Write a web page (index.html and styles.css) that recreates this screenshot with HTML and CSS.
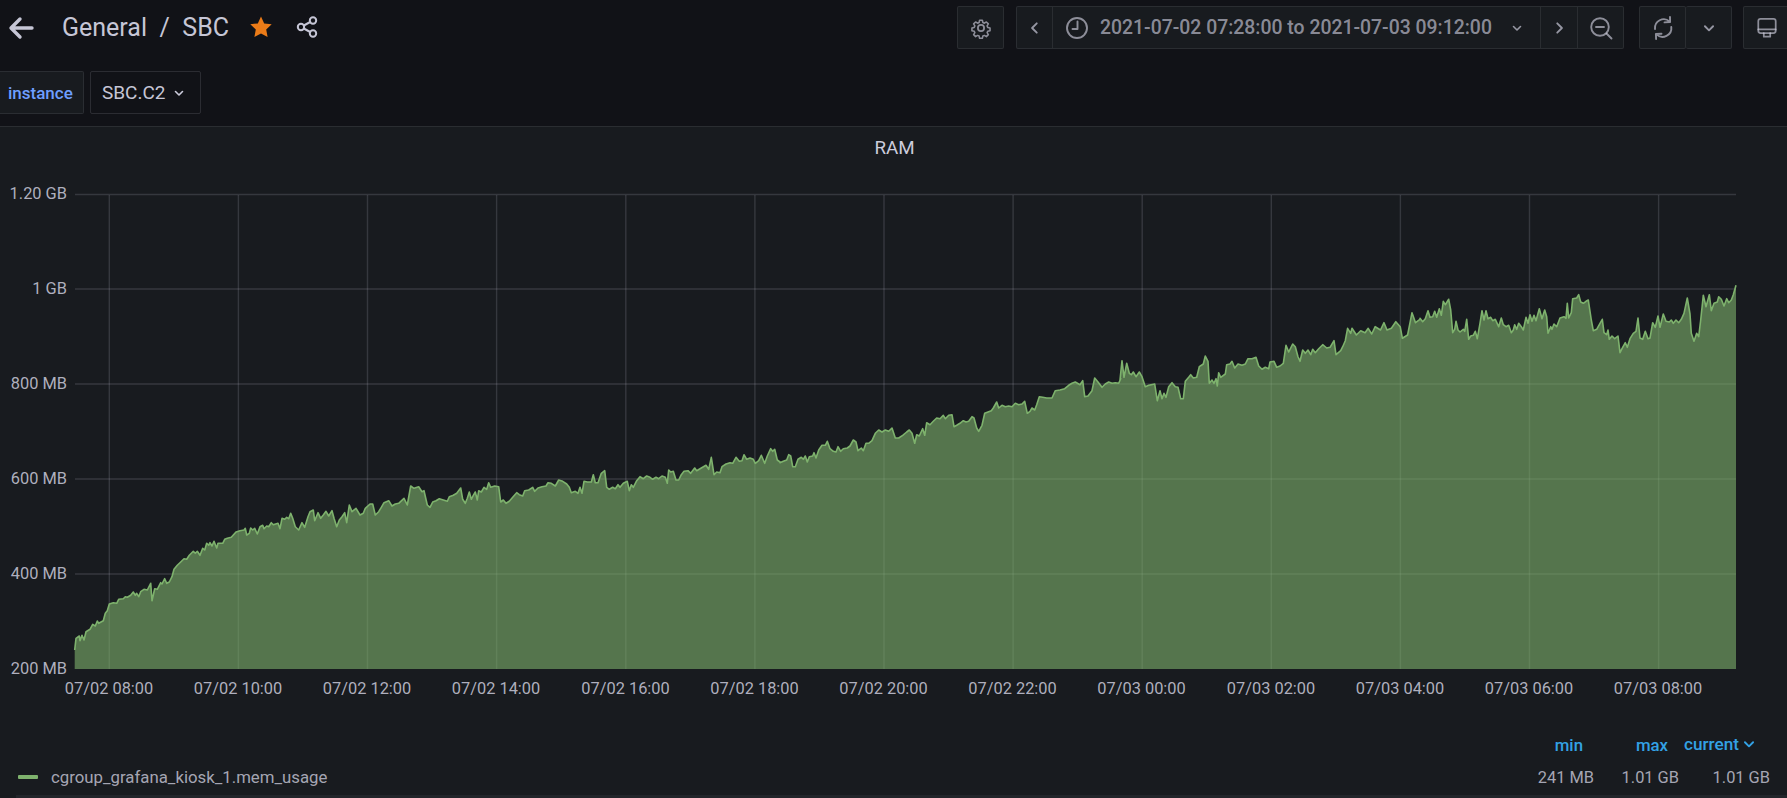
FILE: index.html
```html
<!DOCTYPE html>
<html lang="en">
<head>
<meta charset="utf-8">
<title>General / SBC</title>
<link rel="stylesheet" href="styles.css">
</head>
<body>
<header class="topbar">
  <button class="back" aria-label="Back">
    <svg class="ico-back" viewBox="0 0 26 24"><path d="M12 3 3 12l9 9M3.500 12H24"/></svg>
  </button>
  <h1 class="crumbs"><span>General</span><span class="slash">/</span><span>SBC</span></h1>
  <svg class="ico-star" viewBox="0 0 24 24"><path d="M12 1.500l3.200 6.900 7.500.9-5.500 5.200 1.400 7.500L12 18.400l-6.600 3.600 1.400-7.500-5.500-5.200 7.500-.9z"/></svg>
  <svg class="ico-share" viewBox="0 0 22 22"><circle cx="17" cy="4.500" r="3.200"/><circle cx="5" cy="11" r="3.200"/><circle cx="17" cy="17.500" r="3.200"/><path d="M7.800 9.500l6.400-3.500M7.800 12.500l6.400 3.500"/></svg>
  <div class="spacer"></div>
  <button class="btn btn-gear" aria-label="Settings">
    <svg class="ico" viewBox="0 0 24 24"><circle cx="12" cy="12" r="3.400"/><path d="M10.300 2.500h3.400l.6 2.800 1.900.8 2.400-1.500 2.400 2.400-1.500 2.400.8 1.900 2.800.6v3.400l-2.800.6-.8 1.900 1.500 2.400-2.400 2.400-2.400-1.500-1.900.8-.6 2.800h-3.400l-.6-2.800-1.900-.8-2.400 1.500-2.400-2.400 1.500-2.400-.8-1.900-2.800-.6v-3.400l2.800-.6.8-1.900-1.500-2.400 2.400-2.400 2.400 1.500 1.900-.8z" transform="translate(1.300 1.300) scale(.89)"/></svg>
  </button>
  <div class="range">
    <button class="btn seg seg-prev" aria-label="Earlier"><svg class="chev" viewBox="0 0 12 12"><path d="M7.500 2 3.500 6l4 4"/></svg></button>
    <button class="btn seg seg-picker">
      <svg class="ico ico-lg" viewBox="0 0 24 24"><circle cx="12" cy="12" r="10"/><path d="M12.500 5.500V13H7.500"/></svg>
      <span class="range-text">2021-07-02 07:28:00 to 2021-07-03 09:12:00</span>
      <svg class="chev chev-range" viewBox="0 0 12 12"><path d="M2.500 4.500 6 8l3.500-3.500"/></svg>
    </button>
    <button class="btn seg seg-next" aria-label="Later"><svg class="chev" viewBox="0 0 12 12"><path d="M4.500 2l4 4-4 4"/></svg></button>
    <button class="btn seg seg-zoom" aria-label="Zoom out"><svg class="ico ico-lg" viewBox="0 0 24 24"><circle cx="11" cy="11" r="8.800"/><path d="M7 11h8M17.500 17.500l5 5"/></svg></button>
  </div>
  <div class="refresh">
    <button class="btn btn-sync" aria-label="Refresh"><svg class="ico ico-lg" viewBox="0 0 24 24"><path d="M4 13a8.800 8.800 0 0 1 14.500-7.600M20.300 11a8.800 8.800 0 0 1-14.800 7.400M13.500 6.400l5.600-.4L19 1M10.500 17.800l-5.600.2.200 5"/></svg></button>
    <button class="btn btn-drop" aria-label="Refresh interval"><svg class="chev" viewBox="0 0 12 12"><path d="M2.500 4.500 6 8l3.500-3.500"/></svg></button>
  </div>
  <button class="btn btn-tv" aria-label="Cycle view"><svg class="ico" viewBox="0 0 24 24"><rect x="2.500" y="2" width="19" height="15.500" rx="2.500"/><path d="M2.500 13.500h19M8.500 17.500v4h7v-4"/></svg></button>
</header>

<nav class="vars">
  <label class="var-label">instance</label>
  <button class="var-value">SBC.C2<svg class="chev chev-var" viewBox="0 0 12 12"><path d="M2.500 4.500 6 8l3.500-3.500"/></svg></button>
</nav>

<main class="panel">
  <h2 class="panel-title">RAM</h2>
  <svg class="chart" viewBox="0 160 1787 560" width="1787" height="560">
    <g class="grid">
      <path d="M75 194.500H1736M75 289H1736M75 384H1736M75 479H1736M75 574H1736"/>
      <path d="M109.300 195V669M238.400 195V669M367.500 195V669M496.600 195V669M625.800 195V669M754.900 195V669M884 195V669M1013.100 195V669M1142.200 195V669M1271.300 195V669M1400.400 195V669M1529.500 195V669M1658.600 195V669"/>
    </g>
    <path id="series-fill" class="series-fill" d=""/>
    <path id="series-line" class="series-line" d=""/>
    <g class="y-labels">
      <text x="67" y="199">1.20 GB</text>
      <text x="67" y="294">1 GB</text>
      <text x="67" y="389">800 MB</text>
      <text x="67" y="484">600 MB</text>
      <text x="67" y="579">400 MB</text>
      <text x="67" y="674">200 MB</text>
    </g>
    <g class="x-labels">
      <text x="109" y="694">07/02 08:00</text>
      <text x="238" y="694">07/02 10:00</text>
      <text x="367" y="694">07/02 12:00</text>
      <text x="496" y="694">07/02 14:00</text>
      <text x="625.500" y="694">07/02 16:00</text>
      <text x="754.500" y="694">07/02 18:00</text>
      <text x="883.500" y="694">07/02 20:00</text>
      <text x="1012.500" y="694">07/02 22:00</text>
      <text x="1141.500" y="694">07/03 00:00</text>
      <text x="1271" y="694">07/03 02:00</text>
      <text x="1400" y="694">07/03 04:00</text>
      <text x="1529" y="694">07/03 06:00</text>
      <text x="1658" y="694">07/03 08:00</text>
    </g>
  </svg>
  <section class="legend">
    <span></span>
    <span class="lh">min</span>
    <span class="lh">max</span>
    <span class="lh lh-current">current<svg class="chev chev-legend" viewBox="0 0 12 12"><path d="M2.500 4.500 6 8l3.500-3.500"/></svg></span>
    <span class="series-name"><i class="swatch"></i>cgroup_grafana_kiosk_1.mem_usage</span>
    <span class="val">241 MB</span>
    <span class="val">1.01 GB</span>
    <span class="val">1.01 GB</span>
  </section>
  <div class="strip"></div>
</main>
<script src="chart.js"></script>
</body>
</html>
```
FILE: styles.css
```css
* { box-sizing: border-box; }
html, body { margin: 0; height: 798px; overflow: hidden; }
body {
  background: #111217;
  color: #ccccdc;
  font-family: Roboto, "Liberation Sans", sans-serif;
  font-size: 16px;
  display: flex;
  flex-direction: column;
}
button { font: inherit; color: inherit; padding: 0; background: none; border: 0; }

/* top bar */
.topbar {
  width: 1790px;
  height: 49px;
  padding-top: 6px;
  display: flex;
  align-items: flex-start;
  flex: none;
}
.back { width: 62px; height: 43px; padding-left: 8px; display: flex; align-items: center; }
.ico-back { width: 26px; height: 24px; fill: none; stroke: #c6c6d6; stroke-width: 3.400; stroke-linecap: round; stroke-linejoin: round; }
.crumbs { margin: 0; height: 43px; display: flex; align-items: center; font-size: 25px; font-weight: 400; color: #c6c6d6; white-space: nowrap; width: 187px; }
.slash { margin: 0 12.500px; }
.ico-star { width: 24px; height: 24px; margin-top: 9px; fill: #eb7b18; }
.ico-share { width: 22px; height: 22px; margin: 10px 0 0 23px; fill: none; stroke: #c6c6d6; stroke-width: 2; stroke-linecap: round; }
.spacer { flex: 1; }

.btn {
  height: 43px;
  background: #181b1f;
  border: 1px solid rgba(204, 204, 220, .1);
  border-radius: 2px;
  color: rgba(204, 204, 220, .65);
  display: flex;
  align-items: center;
  justify-content: center;
  flex: none;
}
.ico { width: 22px; height: 22px; fill: none; stroke: rgba(204, 204, 220, .65); stroke-width: 1.900; stroke-linecap: round; stroke-linejoin: round; }
.ico-lg { width: 24px; height: 24px; flex: none; }
.chev { width: 14px; height: 14px; fill: none; stroke: rgba(204, 204, 220, .7); stroke-width: 1.600; stroke-linecap: round; stroke-linejoin: round; }

.btn-gear { width: 47px; margin-right: 12px; }
.range { display: flex; margin-right: 15px; }
.seg { border-radius: 0; border-right-width: 0; }
.seg-prev { width: 36px; border-radius: 2px 0 0 2px; }
.seg-picker { width: 488px; justify-content: flex-start; padding-left: 12px; }
.seg-next { width: 37px; }
.seg-zoom { width: 47px; border-right-width: 1px; border-radius: 0 2px 2px 0; }
.range-text { margin-left: 11px; font-size: 19.400px; font-weight: 500; white-space: nowrap; }
.chev-range { margin-left: 19px; width: 12px; height: 12px; }
.refresh { display: flex; margin-right: 11px; }
.btn-sync { width: 47px; }
.btn-drop { width: 46px; border-left-width: 0; }
.btn-tv { width: 47px; }

/* variables */
.vars { height: 43px; margin-top: 22px; display: flex; gap: 6px; flex: none; }
.var-label {
  width: 84px;
  background: #181b1f;
  border: 1px solid rgba(204, 204, 220, .1);
  border-left: 0;
  border-radius: 0 2px 2px 0;
  color: #6e9fff;
  font-size: 17px;
  font-weight: 500;
  display: flex;
  align-items: center;
  padding-left: 8px;
}
.var-value {
  width: 111px;
  border: 1px solid rgba(204, 204, 220, .14);
  border-radius: 2px;
  font-size: 19px;
  display: flex;
  align-items: center;
  padding-left: 11px;
  color: #c6c6d6;
}
.chev-var { margin-left: 7px; width: 12px; height: 12px; stroke: #ccccdc; }

/* panel */
.panel {
  margin-top: 12px;
  flex: 1;
  display: flex;
  flex-direction: column;
  background: #181b1f;
  border-top: 1px solid rgba(204, 204, 220, .1);
}
.panel-title { margin: 0; padding: 11px 0 2px 2px; line-height: 20px; text-align: center; font-size: 18.800px; font-weight: 400; height: 33px; }
.chart { display: block; flex: none; }
.grid path { fill: none; stroke: rgba(204, 204, 220, .17); stroke-width: 1.400; }
.series-fill { fill: rgba(126, 178, 109, .6); }
.series-line { fill: none; stroke: #7eb26d; stroke-width: 1.600; stroke-linejoin: round; }
.y-labels text { text-anchor: end; font-size: 16.400px; fill: rgba(204, 204, 220, .85); }
.x-labels text { text-anchor: middle; font-size: 16.400px; fill: rgba(204, 204, 220, .85); }

/* legend */
.legend {
  padding: 14px 17px 0 18px;
  display: grid;
  grid-template-columns: 1fr 57px 85px 91px;
  grid-auto-rows: 22px;
  row-gap: 10px;
  align-items: center;
  white-space: nowrap;
}
.lh { color: #33a2e5; font-size: 16.800px; font-weight: 500; text-align: right; padding-right: 11px; }
.lh-current { padding-right: 14px; padding-bottom: 2px; display: flex; justify-content: flex-end; align-items: center; font-size: 17.200px; }
.chev-legend { stroke: #33a2e5; margin-left: 3px; }
.series-name { display: flex; align-items: center; font-size: 16.800px; color: rgba(204, 204, 220, .8); }
.swatch { width: 20px; height: 4px; border-radius: 1px; background: #7eb26d; margin-right: 13px; }
.val { text-align: right; font-size: 16.400px; color: rgba(204, 204, 220, .8); }
.strip { margin: auto 0 0 16px; height: 3px; background: #22252a; }
```
FILE: chart.js
```js
// Series samples, grouped by capture window: origin, scale, then x,y pairs.
var segments = [
  { x: 70, y: 480, sx: 3, sy: 3, p: [14,510,18,475,28,468,30,482,36,466,42,480,48,455,60,448,68,433,76,438,82,423,86,430,100,422,106,400,112,392,118,372,130,368,140,370,146,358,160,356,166,350,172,352,182,346,190,336,196,346,200,340,206,350,212,335,222,328,232,330,242,310,246,362,254,326,262,328,272,308,276,312,284,296,290,310,298,306,306,290,312,268,322,256,332,246,342,236,350,238,358,226,370,214,376,220,382,214,390,226,398,205,404,210,410,190,416,196,420,188,426,198,432,184,440,204,444,190,458,190,464,178,472,175,484,172,498,156,510,152,522,150,526,145,530,165,538,160,542,144,548,150,554,145,562,162,570,140,578,136,582,146,590,138,596,140,604,128,610,134,624,130,630,146,636,115,644,118,650,112,656,116,662,100,668,115,676,140,686,150,696,128,704,142,714,110,720,95,730,90,734,122,744,98,752,115,760,105,768,94,776,108,786,92,792,115,800,140,808,120,816,110,824,98,830,128,838,75,846,95,858,85,870,105,880,100,886,85,900,72,908,72,916,105,926,95,934,82,942,68,956,62,966,78,976,72,986,70,1002,55,1012,75,1022,18,1032,25,1046,20,1056,35,1062,32,1072,75,1080,82] },
  { x: 420, y: 430, sx: 3, sy: 3, p: [30,232,38,216,48,212,58,206,70,210,82,214,88,200,100,196,110,190,122,174,128,208,136,220,142,205,148,186,154,208,160,196,166,186,172,210,176,182,184,186,192,172,200,178,206,158,212,172,224,168,236,170,242,216,250,210,258,220,268,214,278,202,290,188,298,194,308,198,314,182,326,180,338,172,344,184,354,174,366,170,378,168,384,158,394,160,406,168,416,150,428,154,440,162,448,172,454,188,466,184,474,190,480,172,486,190,492,154,502,156,514,156,520,134,526,158,534,158,544,130,554,122,560,172,568,178,578,172,586,176,594,164,600,172,610,160,622,154,628,182,634,164,640,172,650,152,660,140,670,146,680,138,690,142,698,148,708,142,716,146,726,138,736,142,742,160,746,120,752,126,760,124,768,150,776,150,784,134,792,124,804,122,812,130,824,114,830,122,844,114,858,106,866,118,874,82,882,134,890,126,900,128,906,110,918,102,930,98,938,100,948,82,958,94,966,92,972,74,980,88,990,84,1000,88,1006,100,1016,92,1024,76,1034,100,1042,78,1052,56,1058,64,1064,58,1072,90,1080,96] },
  { x: 770, y: 380, sx: 3, sy: 3, p: [30,248,40,244,50,240,56,224,62,228,68,260,76,260,84,238,94,232,100,238,106,228,112,246,118,230,128,228,132,218,138,234,146,210,156,196,166,196,172,184,180,206,190,214,198,216,204,200,212,214,220,206,232,204,240,198,250,180,258,186,264,212,274,204,280,212,288,190,296,190,306,182,316,160,326,150,336,156,346,150,356,154,366,144,376,174,386,174,398,166,410,156,418,150,426,160,434,190,440,164,448,168,458,146,464,166,470,128,480,134,490,124,500,114,510,116,520,106,526,116,536,106,546,104,552,140,560,136,570,130,580,122,588,126,596,124,606,110,612,114,620,144,626,154,636,136,644,100,654,96,664,92,670,84,680,66,686,84,696,76,706,80,716,78,726,80,736,70,746,74,756,72,764,64,772,100,780,94,786,84,794,90,800,74,808,50,818,52,830,54,846,54,856,32,870,30,884,26,896,16,906,10,916,6,930,14,938,2,944,50,954,48,966,32,974,-6,984,6,996,22,1006,12,1016,6,1026,10,1036,8,1046,10,1052,-4] },
  { x: 1120, y: 340, sx: 3, sy: 3, p: [0,120,6,62,12,112,20,70,28,100,34,104,40,96,48,110,58,96,66,110,76,140,86,136,104,132,112,182,120,152,126,176,132,160,138,172,146,140,156,128,166,140,174,142,182,176,190,176,196,124,206,112,212,104,220,114,230,112,238,80,250,72,256,48,264,64,268,130,276,120,282,130,288,116,292,138,296,98,302,112,316,102,320,74,330,72,336,64,344,84,354,72,366,76,376,72,384,56,396,56,408,52,416,78,426,88,436,82,446,86,450,66,462,64,470,82,480,78,490,70,498,16,506,36,518,12,526,20,534,50,540,64,548,30,556,40,564,30,572,44,578,28,586,38,596,26,608,14,620,24,630,22,642,2,648,44,662,32,668,20,676,2] },
  { x: 1100, y: 260, sx: 2.282, sy: 3, p: [565,205,572,220,575,205,585,225,595,212,605,218,612,205,620,222,628,200,640,210,648,188,655,210,665,205,675,185,685,200,690,235,702,225,712,158,720,188,730,178] },
  { x: 1420, y: 270, sx: 3, sy: 3, p: [0,145,8,155,16,146,24,122,30,142,38,140,44,124,50,142,58,116,64,136,70,94,76,104,86,88,92,120,98,188,104,178,108,154,114,180,120,186,130,178,134,184,140,148,146,208,152,198,160,196,166,184,172,206,180,160,186,122,192,150,198,122,204,146,212,142,218,152,226,148,236,170,244,144,250,164,258,170,266,166,274,188,280,180,284,164,290,178,296,160,304,170,310,180,318,142,324,160,330,134,336,154,342,136,348,152,358,116,366,146,374,120,380,140,384,190,392,170,396,178,402,162,410,170,420,144,432,140,438,145,442,100,446,144,454,128,458,86,470,84,476,74,482,96,490,100,498,94,505,90,514,150,520,182,530,178,540,160,547,148,552,188,560,194,564,180,568,208,576,198,584,206,594,198,600,248,606,236,616,218,622,232,630,206,640,190,648,184,654,144,660,204,668,208,676,184,684,206,690,204,698,158,706,172,714,138,720,172,730,132,738,154,748,156,754,150,760,160,768,150,776,158,784,148,792,130,802,84,810,132,814,190,822,214,830,190,836,200,842,150,850,76,858,110,868,74,874,122,882,100,892,96,896,80,904,88,912,108,920,86,926,98,934,90,940,74,948,46] }
];

var pts = [];
segments.forEach(function (s) {
  for (var i = 0; i < s.p.length; i += 2) {
    pts.push((s.x + s.p[i] / s.sx).toFixed(1) + ' ' + (s.y + s.p[i + 1] / s.sy).toFixed(1));
  }
});
var line = 'M' + pts.join('L');
document.getElementById('series-line').setAttribute('d', line);
document.getElementById('series-fill').setAttribute('d', line + 'L1736 669L74.700 669Z');
```
